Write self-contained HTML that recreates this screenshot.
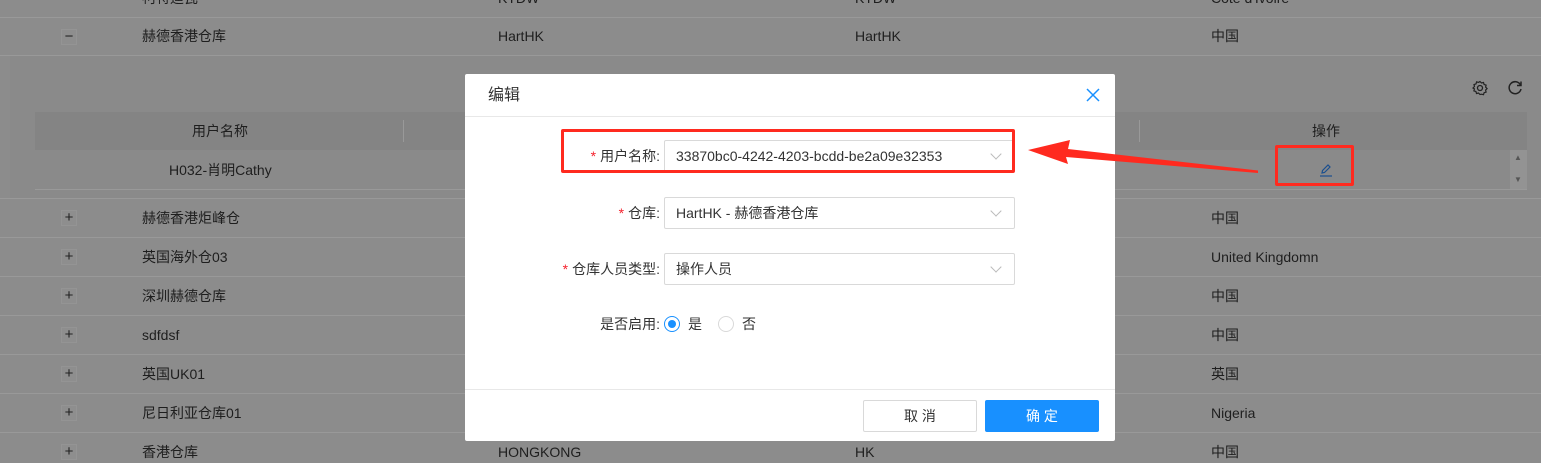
<!DOCTYPE html>
<html><head><meta charset="utf-8"><style>
*{margin:0;padding:0;box-sizing:border-box}
body{width:1541px;height:463px;overflow:hidden;background:#8c8c8c;font-family:"Liberation Sans","Noto Sans CJK SC",sans-serif;font-size:14px;color:#1e1e1e;position:relative}
.a{position:absolute}
.line{position:absolute;left:0;width:1541px;height:1px;background:#999}
.t{position:absolute;line-height:20px;white-space:nowrap}
.pm{position:absolute;width:16px;height:16px;border:1px solid #949494;background:#8e8e8e;font-size:15px;line-height:13px;text-align:center;color:#222}
.sel{position:absolute;left:664px;width:351px;height:32px;border:1px solid #d9d9d9;border-radius:2px;padding-left:11px;line-height:30px;color:#333;font-size:14px}
.sel:after{content:"";position:absolute;right:14px;top:9px;width:7px;height:7px;border-right:1px solid #bbb;border-bottom:1px solid #bbb;transform:rotate(45deg)}
.lbl{position:absolute;right:455px;text-align:right;line-height:20px;color:#333;white-space:nowrap}
.lbl b{color:#f5222d;font-weight:normal;margin-right:4px;font-family:"Liberation Sans"}
</style></head><body>
<div class="line" style="top:17px"></div>
<div class="line" style="top:55px"></div>
<div class="a" style="left:10px;top:56px;width:1531px;height:142px;background:#8a8a8a"></div>
<div class="a" style="left:35px;top:112px;width:1492px;height:38px;background:#848484"></div>
<div class="a" style="left:403px;top:120px;width:1px;height:22px;background:#999"></div>
<div class="a" style="left:1139px;top:120px;width:1px;height:22px;background:#999"></div>
<div class="a" style="left:35px;top:189px;width:1492px;height:1px;background:#999"></div>
<div class="a" style="left:1510px;top:150px;width:17px;height:39px;background:#939393"></div>
<div class="t" style="left:1514px;top:148px;font-size:8px;color:#555">▲</div>
<div class="t" style="left:1514px;top:170px;font-size:8px;color:#555">▼</div>
<div class="line" style="top:198px"></div>
<div class="line" style="top:237px"></div>
<div class="line" style="top:276px"></div>
<div class="line" style="top:315px"></div>
<div class="line" style="top:354px"></div>
<div class="line" style="top:393px"></div>
<div class="line" style="top:432px"></div>
<div class="t" style="left:142px;top:-12px">柯特迪瓦</div><div class="t" style="left:498px;top:-12px">KTDW</div><div class="t" style="left:855px;top:-12px">KTDW</div><div class="t" style="left:1211px;top:-12px">Cote d'Ivoire</div>
<div class="pm" style="left:61px;top:29px">−</div>
<div class="t" style="left:142px;top:26px">赫德香港仓库</div><div class="t" style="left:498px;top:26px">HartHK</div><div class="t" style="left:855px;top:26px">HartHK</div><div class="t" style="left:1211px;top:26px">中国</div>
<div class="t" style="left:192px;top:121px">用户名称</div>
<div class="t" style="left:1312px;top:121px">操作</div>
<div class="t" style="left:169px;top:160px">H032-肖明Cathy</div>
<svg class="a" style="left:1318px;top:162px" width="16" height="16" viewBox="0 0 16 16"><path d="M4 11 L4.5 8.5 L10 3 L12 5 L6.5 10.5 Z" fill="none" stroke="#1a4f8f" stroke-width="1.2"/><path d="M2 14 H14" stroke="#1a4f8f" stroke-width="1.2"/></svg>
<svg class="a" style="left:1471px;top:79px" width="18" height="18" viewBox="0 0 18 18"><circle cx="9" cy="9" r="2.5" fill="none" stroke="#222" stroke-width="1.3"/><path d="M9 2.5l1.5 1.5 2-.5.6 2 2 .6-.5 2 1.5 1.5-1.5 1.5.5 2-2 .6-.6 2-2-.5L9 15.5l-1.5-1.5-2 .5-.6-2-2-.6.5-2L2 9l1.5-1.5-.5-2 2-.6.6-2 2 .5z" fill="none" stroke="#222" stroke-width="1.2"/></svg>
<svg class="a" style="left:1506px;top:79px" width="18" height="18" viewBox="0 0 18 18"><path d="M14.5 6A6 6 0 1 0 15 10" fill="none" stroke="#222" stroke-width="1.5"/><path d="M15 2.5V6.5H11" fill="none" stroke="#222" stroke-width="1.5"/></svg>
<div class="pm" style="left:61px;top:210px">+</div><div class="t" style="left:142px;top:208px">赫德香港炬峰仓</div><div class="t" style="left:1211px;top:208px">中国</div>
<div class="pm" style="left:61px;top:249px">+</div><div class="t" style="left:142px;top:247px">英国海外仓03</div><div class="t" style="left:1211px;top:247px">United Kingdomn</div>
<div class="pm" style="left:61px;top:288px">+</div><div class="t" style="left:142px;top:286px">深圳赫德仓库</div><div class="t" style="left:1211px;top:286px">中国</div>
<div class="pm" style="left:61px;top:327px">+</div><div class="t" style="left:142px;top:325px">sdfdsf</div><div class="t" style="left:1211px;top:325px">中国</div>
<div class="pm" style="left:61px;top:366px">+</div><div class="t" style="left:142px;top:364px">英国UK01</div><div class="t" style="left:1211px;top:364px">英国</div>
<div class="pm" style="left:61px;top:405px">+</div><div class="t" style="left:142px;top:403px">尼日利亚仓库01</div><div class="t" style="left:1211px;top:403px">Nigeria</div>
<div class="pm" style="left:61px;top:444px">+</div><div class="t" style="left:142px;top:442px">香港仓库</div><div class="t" style="left:498px;top:442px">HONGKONG</div><div class="t" style="left:855px;top:442px">HK</div><div class="t" style="left:1211px;top:442px">中国</div>

<div class="a" style="left:465px;top:74px;width:650px;height:367px;background:#fff;border-radius:2px">
 <div class="t" style="left:23px;top:11px;font-size:16px;color:#333;line-height:22px">编辑</div>
 <svg class="a" style="left:621px;top:14px" width="14" height="14" viewBox="0 0 14 14"><path d="M1 1L13 13M13 1L1 13" stroke="#1890ff" stroke-width="1.5"/></svg>
 <div class="a" style="left:0;top:42px;width:650px;height:1px;background:#e8e8e8"></div>
 <div class="a" style="left:0;top:315px;width:650px;height:1px;background:#e8e8e8"></div>
 <div class="a" style="left:398px;top:326px;width:114px;height:32px;border:1px solid #d9d9d9;border-radius:2px;text-align:center;line-height:30px;color:#333">取 消</div>
 <div class="a" style="left:520px;top:326px;width:114px;height:32px;background:#1890ff;border-radius:2px;text-align:center;line-height:32px;color:#fff">确 定</div>
</div>
<div class="lbl" style="right:881px;top:146px"><b>*</b>用户名称:</div>
<div class="sel" style="top:140px">33870bc0-4242-4203-bcdd-be2a09e32353</div>
<div class="lbl" style="right:881px;top:203px"><b>*</b>仓库:</div>
<div class="sel" style="top:197px">HartHK - 赫德香港仓库</div>
<div class="lbl" style="right:881px;top:259px"><b>*</b>仓库人员类型:</div>
<div class="sel" style="top:253px">操作人员</div>
<div class="lbl" style="right:881px;top:314px">是否启用:</div>
<div class="a" style="left:664px;top:316px;width:16px;height:16px;border:1px solid #1890ff;border-radius:50%"><div class="a" style="left:3px;top:3px;width:8px;height:8px;border-radius:50%;background:#1890ff"></div></div>
<div class="t" style="left:688px;top:314px;color:#333">是</div>
<div class="a" style="left:718px;top:316px;width:16px;height:16px;border:1px solid #d9d9d9;border-radius:50%"></div>
<div class="t" style="left:742px;top:314px;color:#333">否</div>

<div class="a" style="left:561px;top:129px;width:454px;height:44px;border:3px solid #ff2a1f;border-radius:2px"></div>
<div class="a" style="left:1275px;top:145px;width:79px;height:41px;border:3px solid #ff2a1f;border-radius:2px"></div>
<svg class="a" style="left:0;top:0" width="1541" height="463"><path d="M1258 170.5 L1258 173 L1066 157 L1068 164 L1028 150 L1070 140 L1068 149 Z" fill="#ff2a1f"/></svg>
</body></html>
